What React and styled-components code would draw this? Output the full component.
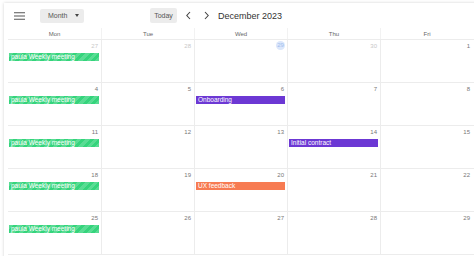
import React from "react"
import styled, { createGlobalStyle } from "styled-components"

const GlobalStyle = createGlobalStyle`
  html, body {
    margin: 0;
    padding: 0;
    background: #fff;
    font-family: "Liberation Sans", Arial, sans-serif;
    overflow: hidden;
  }
`

const Page = styled.div`
  width: 474px;
  height: 256px;
  overflow: hidden;
  padding: 3px 0 0 4px;
  box-sizing: border-box;
`

const Card = styled.div`
  width: 520px;
  height: 300px;
  background: #fff;
  box-shadow: 0 0 3px rgba(0, 0, 0, 0.18);
`

const Toolbar = styled.div`
  height: 25px;
  display: flex;
  align-items: center;
  padding-left: 10px;
`

const IconButton = styled.button`
  border: none;
  background: none;
  padding: 0;
  width: ${p => p.$w || 18}px;
  height: 16px;
  display: flex;
  align-items: center;
  justify-content: center;
  color: #555;
`

const Select = styled.div`
  margin-left: 15px;
  width: 44px;
  height: 14px;
  box-sizing: border-box;
  background: #ececec;
  border-radius: 2px;
  display: flex;
  align-items: center;
  justify-content: space-between;
  padding: 0 5px 0 8px;
  font-size: 7px;
  color: #555;
`

const Caret = styled.span`
  width: 0;
  height: 0;
  border-left: 2.5px solid transparent;
  border-right: 2.5px solid transparent;
  border-top: 3px solid #444;
`

const TodayButton = styled.div`
  margin-left: 66px;
  width: 27px;
  height: 15px;
  background: #ececec;
  border-radius: 2px;
  display: flex;
  align-items: center;
  justify-content: center;
  font-size: 7px;
  color: #555;
`

const Nav = styled.div`
  display: flex;
  align-items: center;
  margin-left: 2px;
`

const Title = styled.div`
  margin-left: 3px;
  font-size: 9px;
  color: #333;
`

const Calendar = styled.div`
  padding-left: 4px;
`

const Grid = styled.div`
  display: grid;
  grid-template-columns: repeat(5, 93px);
  border-bottom: 1px solid #ececec;
  height: ${p => p.$h}px;
  box-sizing: border-box;
`

const DayLabel = styled.div`
  font-size: 6px;
  color: #666;
  text-align: center;
  padding-top: 3px;
  border-left: ${p => (p.$first ? "none" : "1px solid #f2f2f2")};
`

const Cell = styled.div`
  border-left: ${p => (p.$first ? "none" : "1px solid #ececec")};
  display: flex;
  flex-direction: column;
  padding-top: 2px;
  min-width: 0;
`

const DateNum = styled.div`
  align-self: flex-end;
  padding-right: 3px;
  font-size: 6px;
  line-height: 8px;
  height: 8px;
  color: ${p => (p.$muted ? "#c8c8c8" : "#777")};
  ${p =>
    p.$today &&
    `
    width: 9px;
    height: 9px;
    border-radius: 50%;
    background: #dbe7fb;
    color: #a3bdee;
    text-align: center;
    line-height: 9px;
    padding-right: 0;
    margin-right: 2px;
    margin-top: -1px;
  `}
`

const colors = {
  green: `
    background-color: #35d47c;
    background-image: repeating-linear-gradient(
      -45deg,
      rgba(255,255,255,0.18) 0 3px,
      transparent 3px 6px
    );
  `,
  purple: `background: #6c38d4;`,
  orange: `background: #f77b52;`,
}

const Event = styled.div`
  margin: 3px 2px 0 1px;
  height: 8px;
  line-height: 8px;
  font-size: 6.5px;
  color: #fff;
  padding-left: 2px;
  white-space: nowrap;
  overflow: hidden;
  ${p => colors[p.$color]}
`

const days = ["Mon", "Tue", "Wed", "Thu", "Fri"]

const weeks = [
  [
    { d: 27, muted: true, ev: ["paula Weekly meeting", "green"] },
    { d: 28, muted: true },
    { d: 29, today: true },
    { d: 30, muted: true },
    { d: 1 },
  ],
  [
    { d: 4, ev: ["paula Weekly meeting", "green"] },
    { d: 5 },
    { d: 6, ev: ["Onboarding", "purple"] },
    { d: 7 },
    { d: 8 },
  ],
  [
    { d: 11, ev: ["paula Weekly meeting", "green"] },
    { d: 12 },
    { d: 13 },
    { d: 14, ev: ["Initial contract", "purple"] },
    { d: 15 },
  ],
  [
    { d: 18, ev: ["paula Weekly meeting", "green"] },
    { d: 19 },
    { d: 20, ev: ["UX feedback", "orange"] },
    { d: 21 },
    { d: 22 },
  ],
  [
    { d: 25, ev: ["paula Weekly meeting", "green"] },
    { d: 26 },
    { d: 27 },
    { d: 28 },
    { d: 29 },
  ],
]

const Hamburger = () => (
  <svg width="11" height="8" viewBox="0 0 11 8">
    <path d="M0 0.75h11M0 4h11M0 7.25h11" stroke="#555" strokeWidth="1.1" />
  </svg>
)

const Chevron = ({ dir }) => (
  <svg width="7" height="9" viewBox="0 0 7 9">
    <path
      d={dir === "left" ? "M5 1L1.8 4.5 5 8" : "M2 1l3.2 3.5L2 8"}
      fill="none"
      stroke="#444"
      strokeWidth="1.1"
    />
  </svg>
)

const App = () => (
  <Page>
    <GlobalStyle />
    <Card>
      <Toolbar>
        <IconButton $w={11}>
          <Hamburger />
        </IconButton>
        <Select>
          Month
          <Caret />
        </Select>
        <TodayButton>Today</TodayButton>
        <Nav>
          <IconButton>
            <Chevron dir="left" />
          </IconButton>
          <IconButton>
            <Chevron dir="right" />
          </IconButton>
        </Nav>
        <Title>December 2023</Title>
      </Toolbar>
      <Calendar>
        <Grid $h={12}>
          {days.map((d, i) => (
            <DayLabel key={d} $first={i === 0}>
              {d}
            </DayLabel>
          ))}
        </Grid>
        {weeks.map((w, wi) => (
          <Grid key={wi} $h={43}>
            {w.map((c, ci) => (
              <Cell key={ci} $first={ci === 0}>
                <DateNum $muted={c.muted} $today={c.today}>
                  {c.d}
                </DateNum>
                {c.ev && <Event $color={c.ev[1]}>{c.ev[0]}</Event>}
              </Cell>
            ))}
          </Grid>
        ))}
      </Calendar>
    </Card>
  </Page>
)

export default App
